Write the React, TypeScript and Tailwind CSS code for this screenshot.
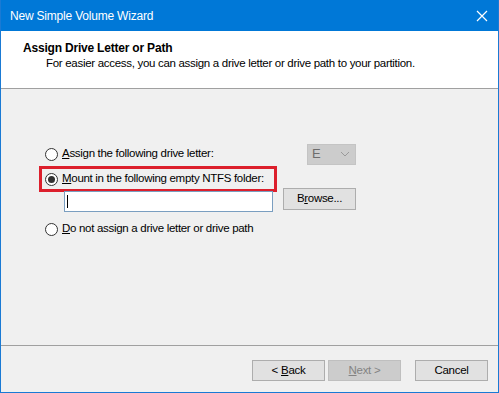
import React from 'react';

const font = { fontFamily: '"Liberation Sans", Arial, sans-serif' };

const Radio = ({ checked }: { checked?: boolean }) => (
  <span className="w-[13px] h-[13px] rounded-full border border-[#333] bg-white flex items-center justify-center shrink-0">
    {checked && <span className="w-[7px] h-[7px] rounded-full bg-[#333]" />}
  </span>
);

const Btn = ({ children, disabled }: { children: React.ReactNode; disabled?: boolean }) => (
  <div
    className={`w-[73px] h-[21px] shrink-0 flex items-center justify-center border ${
      disabled ? 'border-[#bfbfbf] bg-[#cccccc] text-[#838383]' : 'border-[#adadad] bg-[#e1e1e1] text-black'
    }`}
  >
    {children}
  </div>
);

export default function App() {
  return (
    <div
      className="w-[499px] h-[393px] flex flex-col bg-[#f0f0f0] border-x border-b border-[#1a7ad4] overflow-hidden text-[11.5px] tracking-[-0.3px] whitespace-nowrap"
      style={font}
    >
      {/* title bar */}
      <div className="h-[31px] bg-[#0078d7] flex items-center justify-between pl-[9px] pr-[10px] shrink-0">
        <span className="text-white text-[12px] tracking-[-0.2px]">New Simple Volume Wizard</span>
        <svg width="12" height="12" viewBox="0 0 12 12" className="mt-[1px]">
          <path d="M1 1 L11 11 M11 1 L1 11" stroke="white" strokeWidth="1.2" />
        </svg>
      </div>

      {/* header */}
      <div className="h-[58px] bg-white border-b border-[#a0a0a0] pl-[22px] pt-[10px] shrink-0 text-black">
        <div className="font-bold leading-[15px] text-[12px] tracking-[-0.2px]">Assign Drive Letter or Path</div>
        <div className="pl-[23px] leading-[15px]">
          For easier access, you can assign a drive letter or drive path to your partition.
        </div>
      </div>

      {/* body */}
      <div className="flex-1 pl-[44px] pt-[54px] text-black">
        <div className="flex items-center h-[22px] w-[311px]">
          <Radio />
          <span className="ml-[4px]"><u>A</u>ssign the following drive letter:</span>
          <div className="ml-auto w-[49px] h-[21px] bg-[#cccccc] border border-[#c4c4c4] flex items-center justify-between pl-[4px] pr-[5px] text-[#6d6d6d]">
            <span className="text-[13px]">E</span>
            <svg width="10" height="6" viewBox="0 0 10 6">
              <path d="M1 1 L5 5 L9 1" stroke="#9a9a9a" strokeWidth="1" fill="none" />
            </svg>
          </div>
        </div>
        <div className="flex items-center h-[26px] w-[238px] -ml-[6px] pl-[3px] border-[3px] border-[#dc1f2c] mt-[1px]">
          <Radio checked />
          <span className="ml-[4px]"><u>M</u>ount in the following empty NTFS folder:</span>
        </div>
        <div className="flex items-center ml-[19px] w-[292px]">
          <div className="w-[209px] h-[21px] bg-white border border-[#7a9ec0] -mt-[1px] flex items-center pl-[2px]">
            <span className="w-px h-[13px] bg-black" />
          </div>
          <div className="ml-auto -mt-[6px] w-[73px] h-[22px] flex items-center justify-center border border-[#adadad] bg-[#e1e1e1]">
            B<u>r</u>owse...
          </div>
        </div>
        <div className="flex items-center h-[22px] mt-[6px]">
          <Radio />
          <span className="ml-[4px]"><u>D</u>o not assign a drive letter or drive path</span>
        </div>
      </div>

      {/* footer */}
      <div className="h-[47px] border-t border-[#a0a0a0] flex items-start justify-end gap-[3px] pt-[14px] pr-[10px] shrink-0">
        <Btn>
          <span className="mr-[3px]">&lt;</span>
          <u>B</u>ack
        </Btn>
        <Btn disabled>
          <u>N</u>ext<span className="ml-[3px]">&gt;</span>
        </Btn>
        <div className="w-[8px]" />
        <Btn>Cancel</Btn>
      </div>
    </div>
  );
}
